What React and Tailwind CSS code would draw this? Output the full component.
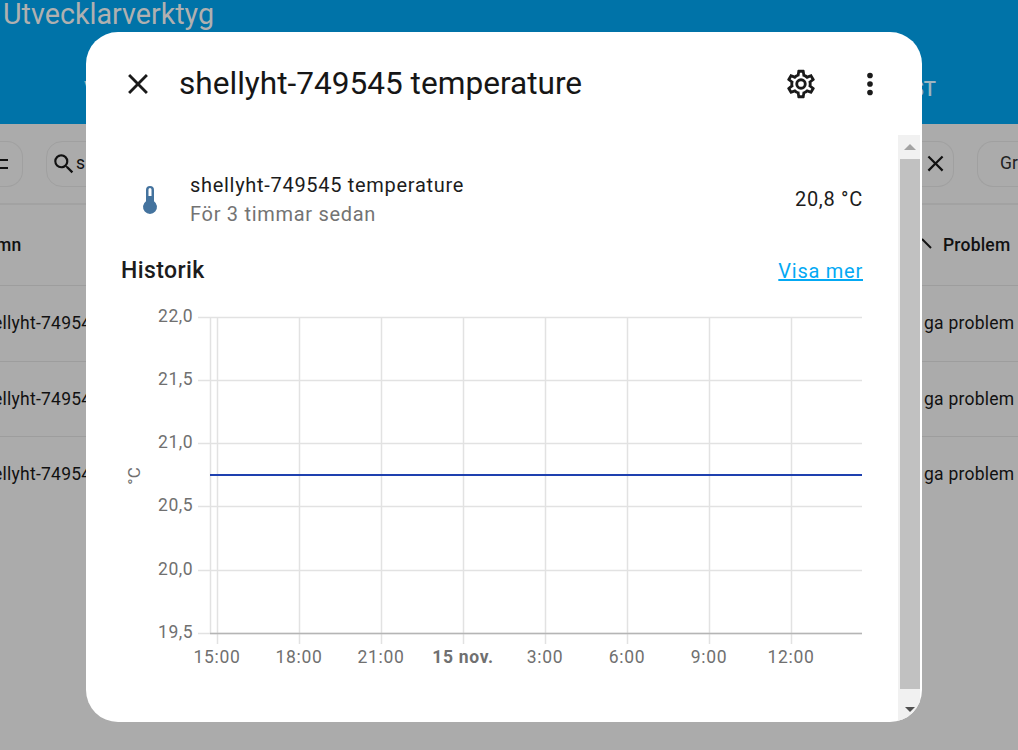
const yTicks = [
  { label: "22,0", y: 317 },
  { label: "21,5", y: 380 },
  { label: "21,0", y: 443 },
  { label: "20,5", y: 506 },
  { label: "20,0", y: 570 },
  { label: "19,5", y: 633 },
];

const xTicks = [
  { label: "15:00", x: 217 },
  { label: "18:00", x: 299 },
  { label: "21:00", x: 381 },
  { label: "15 nov.", x: 463, bold: true },
  { label: "3:00", x: 545 },
  { label: "6:00", x: 627 },
  { label: "9:00", x: 709 },
  { label: "12:00", x: 791 },
];

const COG =
  "M12,8A4,4 0 0,1 16,12A4,4 0 0,1 12,16A4,4 0 0,1 8,12A4,4 0 0,1 12,8M12,10A2,2 0 0,0 10,12A2,2 0 0,0 12,14A2,2 0 0,0 14,12A2,2 0 0,0 12,10M10,22C9.75,22 9.54,21.82 9.5,21.58L9.13,18.93C8.5,18.68 7.96,18.34 7.44,17.94L4.95,18.95C4.73,19.03 4.46,18.95 4.34,18.73L2.34,15.27C2.21,15.05 2.27,14.78 2.46,14.63L4.57,12.97L4.5,12L4.57,11L2.46,9.37C2.27,9.22 2.21,8.95 2.34,8.73L4.34,5.27C4.46,5.05 4.73,4.96 4.95,5.05L7.44,6.05C7.96,5.66 8.5,5.32 9.13,5.07L9.5,2.42C9.54,2.18 9.75,2 10,2H14C14.25,2 14.46,2.18 14.5,2.42L14.87,5.07C15.5,5.32 16.04,5.66 16.56,6.05L19.05,5.05C19.27,4.96 19.54,5.05 19.66,5.27L21.66,8.73C21.79,8.95 21.73,9.22 21.54,9.37L19.43,11L19.5,12L19.43,13L21.54,14.63C21.73,14.78 21.79,15.05 21.66,15.27L19.66,18.73C19.54,18.95 19.27,19.04 19.05,18.95L16.56,17.95C16.04,18.34 15.5,18.68 14.87,18.93L14.5,21.58C14.46,21.82 14.25,22 14,22H10M11.25,4L10.88,6.61C9.68,6.86 8.62,7.5 7.85,8.39L5.44,7.35L4.69,8.65L6.8,10.2C6.4,11.37 6.4,12.64 6.8,13.8L4.68,15.36L5.43,16.66L7.86,15.62C8.63,16.5 9.68,17.14 10.87,17.38L11.24,20H12.76L13.13,17.39C14.32,17.14 15.37,16.5 16.14,15.62L18.57,16.66L19.32,15.36L17.2,13.81C17.6,12.64 17.6,11.37 17.2,10.2L19.31,8.65L18.56,7.35L16.15,8.39C15.38,7.5 14.32,6.86 13.12,6.62L12.75,4H11.25Z";
const CLOSE =
  "M19,6.41L17.59,5L12,10.59L6.41,5L5,6.41L10.59,12L5,17.59L6.41,19L12,13.41L17.59,19L19,17.59L13.41,12L19,6.41Z";
const DOTS =
  "M12,16A2,2 0 0,1 14,18A2,2 0 0,1 12,20A2,2 0 0,1 10,18A2,2 0 0,1 12,16M12,10A2,2 0 0,1 14,12A2,2 0 0,1 12,14A2,2 0 0,1 10,12A2,2 0 0,1 12,10M12,4A2,2 0 0,1 14,6A2,2 0 0,1 12,8A2,2 0 0,1 10,6A2,2 0 0,1 12,4Z";
const MAGNIFY =
  "M9.5,3A6.5,6.5 0 0,1 16,9.5C16,11.11 15.41,12.59 14.44,13.73L14.71,14H15.5L20.5,19L19,20.5L14,15.5V14.71L13.73,14.44C12.59,15.41 11.11,16 9.5,16A6.5,6.5 0 0,1 3,9.5A6.5,6.5 0 0,1 9.5,3M9.5,5C7,5 5,7 5,9.5C5,12 7,14 9.5,14C12,14 14,12 14,9.5C14,7 12,5 9.5,5Z";

function Mdi({ d, size, color = "#1a1a1a", className = "" }) {
  return (
    <svg className={`shrink-0 ${className}`} width={size} height={size} viewBox="0 0 24 24" fill={color}>
      <path d={d} />
    </svg>
  );
}

function HistoryChart() {
  // coordinates are page pixels minus the chart's origin (121, 300)
  return (
    <svg width="742" height="375" className="block" style={{ fontFamily: "Roboto, sans-serif" }}>
      <g transform="translate(-121 -300)">
        {yTicks.map((t) => (
          <g key={t.label}>
            <line x1="198" x2="862" y1={t.y + 0.5} y2={t.y + 0.5} stroke="#e2e2e2" strokeWidth="1.5" />
            <text x="193" y={t.y + 5} textAnchor="end" fontSize="17.5" letterSpacing="0.5" fill="#707070">
              {t.label}
            </text>
          </g>
        ))}
        <line x1="210.5" x2="210.5" y1="317" y2="633" stroke="#e2e2e2" strokeWidth="1.5" />
        {xTicks.map((t) => (
          <g key={t.label}>
            <line x1={t.x + 0.5} x2={t.x + 0.5} y1="317" y2="644" stroke="#e2e2e2" strokeWidth="1.5" />
            <text
              x={t.x}
              y="663"
              textAnchor="middle"
              fontSize="17.5"
              letterSpacing="0.7"
              fontWeight={t.bold ? 700 : 400}
              fill="#707070"
            >
              {t.label}
            </text>
          </g>
        ))}
        <line x1="210" x2="862" y1="633.5" y2="633.5" stroke="#b5b5b5" strokeWidth="1.5" />
        <line x1="210" x2="862" y1="475" y2="475" stroke="#1e40af" strokeWidth="2" />
        <text
          transform="translate(140 476) rotate(-90)"
          textAnchor="middle"
          fontSize="17"
          fill="#707070"
        >
          °C
        </text>
      </g>
    </svg>
  );
}

export default function App() {
  return (
    <div className="relative h-[750px] w-[1018px] overflow-hidden bg-[#ababab] font-['Roboto',sans-serif] text-[#111]">
      {/* Page behind the dialog */}
      <header className="h-[124px] bg-[#0073a8] pl-[3px]">
        <div className="text-[28.7px] leading-[29px] text-[#b0b0b0]">Utvecklarverktyg</div>
        <div className="mt-[45px] flex justify-between pl-[81px] pr-[82px] text-[20px] font-medium text-[#9fb5c0]">
          <span>V</span>
          <span>ST</span>
        </div>
      </header>

      <div className="flex h-[81px] items-center justify-between border-b-2 border-[#a2a2a2]">
        <div className="flex items-center gap-[23px]">
          <div className="flex h-[46px] w-[23px] items-center justify-end rounded-r-2xl border border-l-0 border-[#a0a0a0] pr-[14px]">
            <div className="flex flex-col gap-[6px]">
              <div className="h-[2px] w-[8px] bg-[#111]" />
              <div className="h-[2px] w-[8px] bg-[#111]" />
            </div>
          </div>
          <div className="flex h-[46px] w-[60px] items-center rounded-l-2xl border border-[#a0a0a0] pl-[4px] text-[17.5px]">
            <Mdi d={MAGNIFY} size={26} color="#111" />
            <span className="-ml-[1px]">s</span>
          </div>
        </div>
        <div className="flex items-center gap-[23px]">
          <div className="flex h-[46px] w-[50px] items-center justify-end rounded-r-2xl border border-l-0 border-[#a0a0a0] pr-[4px]">
            <Mdi d={CLOSE} size={27} color="#111" />
          </div>
          <div className="flex h-[46px] w-[41px] items-center rounded-l-2xl border border-r-0 border-[#a0a0a0] pl-[22px] text-[17.5px] text-[#222]">
            Gr
          </div>
        </div>
      </div>

      <div className="flex h-[81px] items-center justify-between border-b border-[#9d9d9d] text-[17.5px] font-medium tracking-[0.2px]">
        <span className="-ml-[4px] whitespace-nowrap">mn</span>
        <div className="flex w-[99px] items-center gap-[10px]">
          <svg className="-mt-[2px] shrink-0" width="14" height="14" viewBox="0 0 14 14" stroke="#111" strokeWidth="2">
            <path d="M3 2l9 9" />
          </svg>
          <span className="whitespace-nowrap">Problem</span>
        </div>
      </div>
      {[
        "h-[76px] border-b",
        "h-[75px] border-b",
        "h-[75px]",
      ].map((rowClass) => (
        <div key={rowClass} className={`flex items-center justify-between border-[#9d9d9d] text-[17.5px] tracking-[0.25px] ${rowClass}`}>
          <span className="-ml-[7px] whitespace-nowrap">ellyht-74954</span>
          <span className="w-[94px] whitespace-nowrap">ga problem</span>
        </div>
      ))}

      {/* Dialog */}
      <div className="absolute left-[86px] top-[32px] flex h-[690px] w-[836px] flex-col overflow-hidden rounded-[32px] bg-white">
        <div className="flex h-[103px] shrink-0 items-center">
          <Mdi d={CLOSE} size={34} className="ml-[35px]" />
          <h1 className="ml-[24px] flex-1 text-[31.6px] font-normal text-[#161616]">shellyht-749545 temperature</h1>
          <Mdi d={COG} size={34} />
          <Mdi d={DOTS} size={34} className="ml-[35px] mr-[35px]" />
        </div>

        <div className="flex min-h-0 flex-1">
          <div className="min-w-0 flex-1 pl-[35px] pr-[35px]">
            <div className="mt-[36px] flex h-[58px] items-center">
              <svg className="ml-[15px] shrink-0" width="28" height="40" viewBox="0 0 28 40" fill="#44739e">
                <path
                  fillRule="evenodd"
                  d="M14 6a4 4 0 0 1 4 4v11.2a7 7 0 1 1-8 0V10a4 4 0 0 1 4-4zm0 2a1.5 1.5 0 0 0-1.5 1.5V16h3V9.5A1.5 1.5 0 0 0 14 8z"
                />
              </svg>
              <div className="ml-[26px] flex-1">
                <div className="text-[20px] leading-[28px] tracking-[0.7px] text-[#1c1c1c]">shellyht-749545 temperature</div>
                <div className="text-[20px] leading-[30px] tracking-[0.7px] text-[#737373]">För 3 timmar sedan</div>
              </div>
              <div className="-mt-[3px] text-[20px] tracking-[0.7px] text-[#1c1c1c]">20,8 °C</div>
            </div>
            <div className="mt-[26px] flex h-[32px] items-center justify-between">
              <h2 className="text-[23px] font-medium tracking-[0.4px] text-[#1c1c1c]">Historik</h2>
              <a className="text-[20px] tracking-[0.75px] text-[#03a9f4] underline">Visa mer</a>
            </div>
            <div className="mt-[13px]">
              <HistoryChart />
            </div>
          </div>

          {/* Scrollbar */}
          <div className="mr-[2px] flex w-[22px] shrink-0 flex-col items-end bg-[#f1f1f1]">
            <div className="flex h-[24px] w-[20px] items-center justify-center">
              <div className="h-0 w-0 border-x-[6px] border-b-[6px] border-x-transparent border-b-[#a3a3a3]" />
            </div>
            <div className="h-[530px] w-[20px] bg-[#c1c1c1]" />
            <div className="flex w-[20px] flex-1 items-center justify-center pt-[8px]">
              <div className="h-0 w-0 border-x-[5px] border-t-[5px] border-x-transparent border-t-[#505050]" />
            </div>
          </div>
        </div>
      </div>
    </div>
  );
}
